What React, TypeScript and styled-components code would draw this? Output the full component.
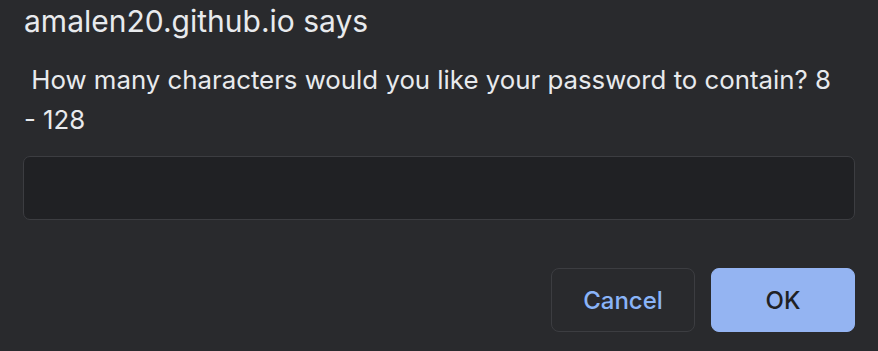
import React from 'react';
import styled, { createGlobalStyle } from 'styled-components';

const GlobalStyle = createGlobalStyle`
  html, body {
    margin: 0;
    padding: 0;
    background-color: #292a2d;
  }
  * {
    box-sizing: border-box;
  }
`;

const Dialog = styled.div`
  width: 878px;
  height: 351px;
  padding: 1px 23px 0 23px;
  background-color: #292a2d;
  color: #e8eaed;
  font-family: Inter, 'Liberation Sans', sans-serif;
  display: flex;
  flex-direction: column;
  overflow: hidden;
`;

const Title = styled.div`
  padding-left: 1px;
  font-size: 30px;
  line-height: 40px;
  font-weight: 400;
`;

const Message = styled.div`
  margin-top: 19px;
  padding-left: 1px;
  font-size: 25.8px;
  line-height: 40px;
  white-space: pre-wrap;
`;

const Range = styled.span`
  white-space: nowrap;
`;

const Field = styled.input`
  margin-top: 16px;
  width: 832px;
  height: 64px;
  background-color: #202124;
  border: 1px solid #3c3d41;
  border-radius: 7px;
  outline: none;
  color: #e8eaed;
  font-size: 24px;
  padding: 0 14px;
  font-family: inherit;
`;

const Actions = styled.div`
  margin-top: 48px;
  display: flex;
  justify-content: flex-end;
  gap: 16px;
`;

const Button = styled.button<{ $primary?: boolean }>`
  width: 144px;
  height: 64px;
  border-radius: 8px;
  font-family: Inter, 'Liberation Sans', sans-serif;
  font-size: 24px;
  font-weight: 500;
  cursor: pointer;
  border: 1px solid ${(p) => (p.$primary ? '#94b4f2' : '#3c3d41')};
  background-color: ${(p) => (p.$primary ? '#94b4f2' : 'transparent')};
  color: ${(p) => (p.$primary ? '#202124' : '#8ab4f8')};
`;

export default function App() {
  return (
    <>
      <GlobalStyle />
      <Dialog>
        <Title>amalen20.github.io says</Title>
        <Message>
          {' How many characters would you like your password to contain? 8 '}
          <Range>- 128</Range>
        </Message>
        <Field type="text" />
        <Actions>
          <Button>Cancel</Button>
          <Button $primary>OK</Button>
        </Actions>
      </Dialog>
    </>
  );
}
